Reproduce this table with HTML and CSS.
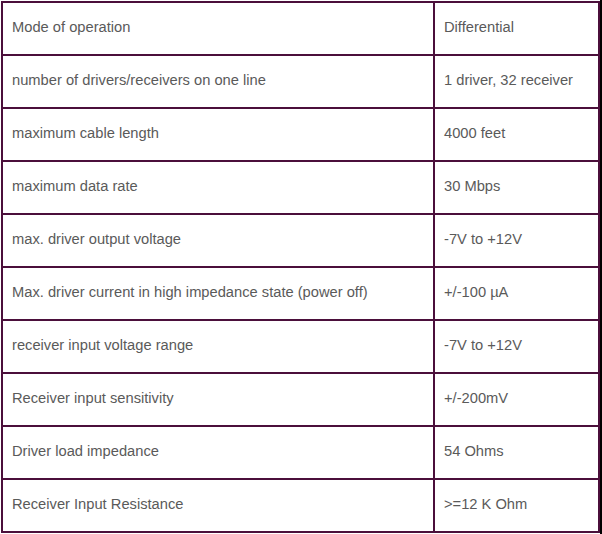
FILE: index.html
```html
<!DOCTYPE html>
<html>
<head>
<meta charset="utf-8">
<link rel="stylesheet" href="styles.css">
</head>
<body>
<div class="frame">
<table class="spec">
<colgroup><col class="c1"><col class="c2"></colgroup>
<tbody>
<tr><td>Mode of operation</td><td>Differential</td></tr>
<tr><td>number of drivers/receivers on one line</td><td>1 driver, 32 receiver</td></tr>
<tr><td>maximum cable length</td><td>4000 feet</td></tr>
<tr><td>maximum data rate</td><td>30 Mbps</td></tr>
<tr><td>max. driver output voltage</td><td>-7V to +12V</td></tr>
<tr><td>Max. driver current in high impedance state (power off)</td><td>+/-100 µA</td></tr>
<tr><td>receiver input voltage range</td><td>-7V to +12V</td></tr>
<tr><td>Receiver input sensitivity</td><td>+/-200mV</td></tr>
<tr><td>Driver load impedance</td><td>54 Ohms</td></tr>
<tr><td>Receiver Input Resistance</td><td>&gt;=12 K Ohm</td></tr>
</tbody>
</table>
</div>
</body>
</html>
```
FILE: styles.css
```css
html, body {
  margin: 0;
  padding: 0;
  background: #fff;
}
.frame {
  width: 602px;
  height: 534px;
  padding: 1px 0 0 1px;
  box-sizing: border-box;
  border-right: 2px solid #000;
}
.spec {
  border-collapse: collapse;
  table-layout: fixed;
  width: 599px;
  font-family: "Liberation Sans", Arial, sans-serif;
  font-size: 14.7px;
  color: #5a5a5a;
}
.c1 { width: 432px; }
.spec td {
  border: 2px solid #4b0f3b;
  height: 53px;
  padding: 0 0 4px 9px;
  box-sizing: border-box;
  vertical-align: middle;
  white-space: nowrap;
}
```
